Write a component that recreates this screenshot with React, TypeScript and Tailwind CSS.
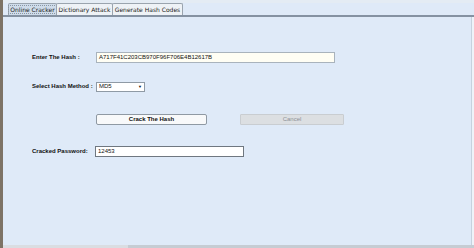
import React from 'react';

const tabs = [
  { label: 'Online Cracker', w: 'w-[49px]' },
  { label: 'Dictionary Attack', w: 'w-[57px]' },
  { label: 'Generate Hash Codes', w: 'w-[71px]' },
];

export default function App() {
  return (
    <div className="w-[474px] h-[248px] flex bg-[#dfeaf8] overflow-hidden" style={{ fontFamily: '"Liberation Sans", Arial, sans-serif' }}>
      <div className="w-[3px] bg-[#7d7366] shrink-0" />
      <div className="flex-1 flex flex-col">
        <div className="h-[3px] bg-[#e4ecf4]" />
        <div className="flex items-end pl-[5px] h-[12px]">
          {tabs.map((t, i) => (
            <div
              key={t.label}
              className={`${t.w} h-[12px] flex items-center justify-center border border-b-0 border-[#9aa4ae] text-[6px] text-[#222] rounded-t-[2px] whitespace-nowrap ${i === 0 ? 'bg-[#cfdcea]' : 'bg-[#eef2f6]'} ${i > 0 ? '-ml-px' : ''}`}
              style={{ fontFamily: '"DejaVu Sans", sans-serif' }}
            >
              <span className={i === 0 ? 'border border-dotted border-[#8a96a3] px-[1px] leading-[7px]' : ''}>{t.label}</span>
            </div>
          ))}
        </div>
        <div className="h-[2px] bg-[#8592a2]" />
        <div className="flex-1 flex">
          <div className="flex-1 flex flex-col pl-[29px] pt-[35px] border-r border-[#c6d2de]">
            <div className="flex items-center h-[11px]">
              <span className="w-[64px] text-[6px] font-bold text-[#111]">Enter The Hash :</span>
              <div className="w-[239px] h-[11px] bg-[#fffef4] border border-[#a9b3bc] flex items-center px-[2px] text-[6px] text-[#111]">
                A717F41C203CB970F96F706E4B12617B
              </div>
            </div>
            <div className="flex items-center h-[11px] mt-[18px]">
              <span className="w-[64px] text-[6px] font-bold text-[#111]">Select Hash Method :</span>
              <div className="w-[49px] h-[10px] bg-white border border-[#8f9aa5] flex items-center justify-between pl-[2px] pr-[2px] text-[6px] text-[#111]">
                <span>MD5</span>
                <span className="text-[4px] leading-none">▼</span>
              </div>
            </div>
            <div className="flex items-center h-[12px] mt-[21px] pl-[64px]">
              <div className="w-[111px] h-[11px] bg-[#f8f9fa] border border-[#8f99a3] rounded-[2px] flex items-center justify-center text-[6px] font-bold text-[#111]">
                Crack The Hash
              </div>
              <div className="w-[104px] h-[11px] ml-[33px] bg-[#dcdfe2] border border-[#c9cdd1] rounded-[1px] flex items-center justify-center text-[6px] text-[#8c9096]">
                Cancel
              </div>
            </div>
            <div className="flex items-center h-[11px] mt-[21px]">
              <span className="w-[63px] text-[6px] font-bold text-[#111]">Cracked Password:</span>
              <div className="w-[149px] h-[11px] bg-white border border-[#6f7780] flex items-center px-[2px] text-[6px] text-[#111]">
                12453
              </div>
            </div>
          </div>
          <div className="w-[2px] bg-[#eef3f9]" />
        </div>
        <div className="h-[3px] flex">
          <div className="w-[125px] bg-[#dadde2]" />
          <div className="flex-1 bg-[#c6ccd3]" />
        </div>
      </div>
    </div>
  );
}
